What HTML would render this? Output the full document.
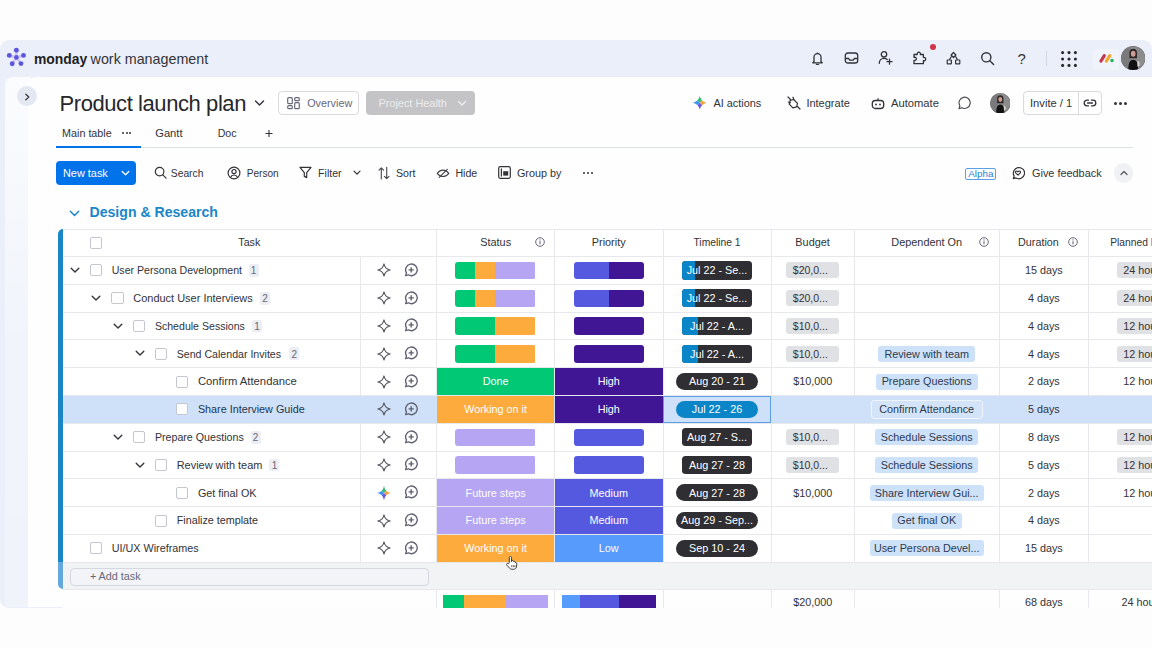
<!DOCTYPE html>
<html><head><meta charset="utf-8"><title>Product launch plan</title>
<style>
html,body{margin:0;padding:0;}
body{width:1152px;height:648px;overflow:hidden;background:#fdfdfd;font-family:"Liberation Sans", sans-serif;position:relative;}
.t{position:absolute;white-space:nowrap;}
.b{position:absolute;box-sizing:border-box;}
</style></head><body>

<div class="b" style="left:0.00px;top:40.00px;width:1152.00px;height:567.60px;background:#ebeff9;border-radius:9px 9px 0 9px;"></div>
<div class="b" style="left:5.00px;top:77.00px;width:26.00px;height:530.00px;background:linear-gradient(180deg,rgba(255,255,255,0.8),rgba(255,255,255,0.35) 45%,rgba(255,255,255,0.25));border-radius:8px 0 0 0;"></div>
<div class="b" style="left:28.00px;top:76.50px;width:1124.00px;height:530.50px;background:#fefefe;border-radius:8px 0 0 0;"></div>
<svg class="b" style="left:0;top:0" width="40" height="80" viewBox="0 0 40 80"><line x1="16.4" y1="57.4" x2="16.4" y2="50.2" stroke="#d2c4f7" stroke-width="2.6"/><line x1="16.4" y1="57.4" x2="23.5" y2="55.4" stroke="#d2c4f7" stroke-width="2.6"/><line x1="16.4" y1="57.4" x2="21.0" y2="63.6" stroke="#d2c4f7" stroke-width="2.6"/><line x1="16.4" y1="57.4" x2="12.2" y2="63.7" stroke="#d2c4f7" stroke-width="2.6"/><line x1="16.4" y1="57.4" x2="9.3" y2="55.4" stroke="#d2c4f7" stroke-width="2.6"/><circle cx="16.4" cy="50.2" r="2.45" fill="#5b57dc"/><circle cx="23.5" cy="55.4" r="2.45" fill="#5b57dc"/><circle cx="21.0" cy="63.6" r="2.45" fill="#5b57dc"/><circle cx="12.2" cy="63.7" r="2.45" fill="#5b57dc"/><circle cx="9.3" cy="55.4" r="2.45" fill="#5b57dc"/><circle cx="16.4" cy="57.4" r="2.3" fill="#5b57dc"/></svg>
<div class="t" style="left:34.00px;top:53.00px;font-size:13.9px;line-height:13.9px;color:#1f1f24;font-weight:700;">monday</div>
<div class="t" style="left:90.60px;top:52.00px;font-size:14.3px;line-height:14.3px;color:#333338;font-weight:400;">work management</div>
<svg class="b" style="left:811.00px;top:51.00px;" width="13" height="14" viewBox="0 0 13 14" fill="none"><path d="M3 10.5V6.2a3.5 3.5 0 0 1 7 0v4.3l1.2 1.3H1.8z" stroke="#323338" stroke-width="1.3" stroke-linejoin="round"/><path d="M5.2 12.8a1.4 1.4 0 0 0 2.6 0" stroke="#323338" stroke-width="1.2"/><path d="M6.5 1.5v1.2" stroke="#323338" stroke-width="1.2"/></svg>
<svg class="b" style="left:844.00px;top:51.00px;" width="15" height="14" viewBox="0 0 15 14" fill="none"><rect x="1.3" y="2" width="12.4" height="10" rx="2.6" stroke="#323338" stroke-width="1.3"/><path d="M1.5 7.5h3.2l1 1.6h3.6l1-1.6h3.2" stroke="#323338" stroke-width="1.3" stroke-linejoin="round"/></svg>
<svg class="b" style="left:878.00px;top:50.00px;" width="15" height="15" viewBox="0 0 15 15" fill="none"><circle cx="6" cy="4.3" r="2.7" stroke="#323338" stroke-width="1.3"/><path d="M1.3 13.3c0-3 2.1-4.9 4.7-4.9 1.3 0 2.4.4 3.2 1.1" stroke="#323338" stroke-width="1.3" stroke-linecap="round"/><path d="M11.5 9.2v5M9 11.7h5" stroke="#323338" stroke-width="1.3" stroke-linecap="round"/></svg>
<svg class="b" style="left:912.00px;top:51.00px;" width="15" height="14" viewBox="0 0 15 14" fill="none"><path d="M2 12.7V9.3c1.4.3 2.4-.6 2.4-1.6S3.4 6 2 6.3V3.5h3.2c-.3-1.5.6-2.3 1.6-2.3s1.9.8 1.6 2.3h3v3c1.4-.3 2.3.6 2.3 1.6s-.9 1.9-2.3 1.6v3z" stroke="#323338" stroke-width="1.3" stroke-linejoin="round"/></svg>
<div class="b" style="left:929.70px;top:44.20px;width:6.20px;height:6.20px;background:#d2334b;border-radius:50%;"></div>
<svg class="b" style="left:946.00px;top:51.00px;" width="15" height="14" viewBox="0 0 15 14" fill="none"><path d="M7.5 1.5l2.4 2.5-2.4 2.5-2.4-2.5z" stroke="#323338" stroke-width="1.2" stroke-linejoin="round"/><path d="M5.6 5.2L3.5 8.6M9.4 5.2l2.1 3.4" stroke="#323338" stroke-width="1.2"/><rect x="1.2" y="9" width="4.2" height="3.8" rx=".6" stroke="#323338" stroke-width="1.2"/><rect x="9.6" y="9" width="4.2" height="3.8" rx=".6" stroke="#323338" stroke-width="1.2"/></svg>
<svg class="b" style="left:980.00px;top:51.00px;" width="15" height="15" viewBox="0 0 15 15" fill="none"><circle cx="6.3" cy="6.3" r="4.6" stroke="#323338" stroke-width="1.4"/><path d="M9.8 9.8l3.8 3.8" stroke="#323338" stroke-width="1.4" stroke-linecap="round"/></svg>
<div class="t" style="left:721.60px;width:600px;text-align:center;top:51.00px;font-size:15px;line-height:15px;color:#323338;font-weight:400;">?</div>
<div class="b" style="left:1046.00px;top:50.50px;width:1.00px;height:15.50px;background:#d3d7e3;"></div>
<svg class="b" style="left:1061.30px;top:50.50px;" width="16" height="16" viewBox="0 0 16 16" fill="none"><circle cx="1.6" cy="1.6" r="1.55" fill="#2b2b30"/><circle cx="8.0" cy="1.6" r="1.55" fill="#2b2b30"/><circle cx="14.4" cy="1.6" r="1.55" fill="#2b2b30"/><circle cx="1.6" cy="8.0" r="1.55" fill="#2b2b30"/><circle cx="8.0" cy="8.0" r="1.55" fill="#2b2b30"/><circle cx="14.4" cy="8.0" r="1.55" fill="#2b2b30"/><circle cx="1.6" cy="14.4" r="1.55" fill="#2b2b30"/><circle cx="8.0" cy="14.4" r="1.55" fill="#2b2b30"/><circle cx="14.4" cy="14.4" r="1.55" fill="#2b2b30"/></svg>
<div class="b" style="left:1093.00px;top:49.00px;width:26.00px;height:20.50px;background:rgba(255,255,255,0.28);border-radius:3px;"></div>
<svg class="b" style="left:1097.00px;top:52.00px;" width="20" height="14" viewBox="0 0 20 14" fill="none"><path d="M4 9l3.3-5.3" stroke="#c13b50" stroke-width="3.3" stroke-linecap="round"/><path d="M9.5 9l3.3-5.3" stroke="#f4a833" stroke-width="3.3" stroke-linecap="round"/><circle cx="15" cy="8.6" r="1.75" fill="#1db55c"/></svg>
<svg class="b" style="left:1120.60px;top:45.80px" width="24.4" height="24.4" viewBox="0 0 24 24"><defs><clipPath id="av1132"><circle cx="12" cy="12" r="11.6"/></clipPath></defs><circle cx="12" cy="12" r="12" fill="#5d5d60"/><g clip-path="url(#av1132)"><rect width="24" height="24" fill="#8c8c8e"/><rect x="0" width="9" height="24" fill="#7a7a7c"/><path d="M8.3 12V6.5C8.3 4 9.8 2.6 12 2.6s3.7 1.4 3.7 3.9V12z" fill="#2e2626"/><ellipse cx="12" cy="7.6" rx="2.3" ry="2.9" fill="#cf9d94"/><path d="M7.2 24c0-6 .8-10.5 4.8-10.5s4.8 4.5 4.8 10.5z" fill="#111"/><path d="M16.2 14.5c1.3 0 2.2 1.3 2.2 3s-.9 3-2.2 3z" fill="#d8d4d0"/></g></svg>
<div class="t" style="left:59.50px;top:93.00px;font-size:22px;line-height:22px;color:#26262b;font-weight:400;letter-spacing:-0.42px;">Product launch plan</div>
<svg class="b" style="left:254.00px;top:99.00px;" width="11" height="8" viewBox="0 0 11 8" fill="none"><path d="M1.5 2l4 4 4-4" stroke="#323338" stroke-width="1.4" stroke-linecap="round" stroke-linejoin="round"/></svg>
<div class="b" style="left:278.00px;top:90.70px;width:81.40px;height:24.50px;border:1px solid #d9d9de;border-radius:4px;background:#fff;"></div>
<svg class="b" style="left:286.50px;top:97.00px;" width="13" height="12.5" viewBox="0 0 13 12.5" fill="none"><rect x=".7" y=".7" width="4.6" height="6" rx="1" stroke="#676879" stroke-width="1.2"/><rect x=".7" y="8.7" width="4.6" height="3" rx="1" stroke="#676879" stroke-width="1.2"/><rect x="7.7" y=".7" width="4.6" height="3" rx="1" stroke="#676879" stroke-width="1.2"/><rect x="7.7" y="5.7" width="4.6" height="6" rx="1" stroke="#676879" stroke-width="1.2"/></svg>
<div class="t" style="left:307.20px;top:98.00px;font-size:10.8px;line-height:10.8px;color:#676879;font-weight:400;">Overview</div>
<div class="b" style="left:365.90px;top:90.80px;width:109.40px;height:24.40px;background:#c4c4c7;border-radius:4px;"></div>
<div class="t" style="left:378.50px;top:98.00px;font-size:10.9px;line-height:10.9px;color:#ececee;font-weight:400;">Project Health</div>
<svg class="b" style="left:457.00px;top:100.00px;" width="10" height="7" viewBox="0 0 10 7" fill="none"><path d="M1.5 1.5l3.5 3.5 3.5-3.5" stroke="#f0f0f2" stroke-width="1.3" stroke-linecap="round" stroke-linejoin="round"/></svg>
<svg class="b" style="left:692.50px;top:96.20px" width="13.5" height="13.5" viewBox="0 0 14 14"><defs><clipPath id="sc1"><path d="M7 0Q8.4 5.6 14 7Q8.4 8.4 7 14Q5.6 8.4 0 7Q5.6 5.6 7 0z"/></clipPath></defs><g clip-path="url(#sc1)"><path d="M7 7L0 0H14z" fill="#34bd74"/><path d="M7 7L14 0V14z" fill="#f9a33c"/><path d="M7 7L14 14H0z" fill="#6c5ce2"/><path d="M7 7L0 14V0z" fill="#3e95ee"/></g></svg>
<div class="t" style="left:713.40px;top:98.00px;font-size:10.9px;line-height:10.9px;color:#323338;font-weight:400;">AI actions</div>
<svg class="b" style="left:787.00px;top:96.00px;" width="14" height="14" viewBox="0 0 14 14" fill="none"><path d="M3.2 4.4l3.5-.9 3.8 3.8-.9 3.5-3.7 1-3.7-3.7z" stroke="#323338" stroke-width="1.2" stroke-linejoin="round"/><path d="M1 1l2.5 2.5M10.5 10.5L13 13M6 1.2l.8 2.3M1.2 6l2.3.8" stroke="#323338" stroke-width="1.2" stroke-linecap="round"/></svg>
<div class="t" style="left:806.40px;top:98.00px;font-size:11px;line-height:11px;color:#323338;font-weight:400;">Integrate</div>
<svg class="b" style="left:870.50px;top:97.00px;" width="14" height="13" viewBox="0 0 14 13" fill="none"><rect x="1.3" y="3.5" width="11.4" height="8" rx="3" stroke="#323338" stroke-width="1.3"/><circle cx="5" cy="7.5" r=".9" fill="#323338"/><circle cx="9" cy="7.5" r=".9" fill="#323338"/><path d="M7 3.5V1.3" stroke="#323338" stroke-width="1.2"/></svg>
<div class="t" style="left:891.00px;top:98.00px;font-size:11.2px;line-height:11.2px;color:#323338;font-weight:400;">Automate</div>
<svg class="b" style="left:957.00px;top:95.50px;" width="14" height="14" viewBox="0 0 14 14" fill="none"><path d="M2 12.6l.9-2.8A5.6 5.6 0 1 1 4.9 11.7z" stroke="#4a4a52" stroke-width="1.15" stroke-linejoin="round"/></svg>
<svg class="b" style="left:989.50px;top:92.70px" width="20.6" height="20.6" viewBox="0 0 24 24"><defs><clipPath id="av999"><circle cx="12" cy="12" r="11.6"/></clipPath></defs><circle cx="12" cy="12" r="12" fill="#5d5d60"/><g clip-path="url(#av999)"><rect width="24" height="24" fill="#8c8c8e"/><rect x="0" width="9" height="24" fill="#7a7a7c"/><path d="M8.3 12V6.5C8.3 4 9.8 2.6 12 2.6s3.7 1.4 3.7 3.9V12z" fill="#2e2626"/><ellipse cx="12" cy="7.6" rx="2.3" ry="2.9" fill="#cf9d94"/><path d="M7.2 24c0-6 .8-10.5 4.8-10.5s4.8 4.5 4.8 10.5z" fill="#111"/><path d="M16.2 14.5c1.3 0 2.2 1.3 2.2 3s-.9 3-2.2 3z" fill="#d8d4d0"/></g></svg>
<div class="b" style="left:1023.30px;top:91.00px;width:78.60px;height:24.00px;border:1px solid #d9d9de;border-radius:4px;background:#fff;"></div>
<div class="b" style="left:1077.50px;top:91.00px;width:1.00px;height:24.00px;background:#d9d9de;"></div>
<div class="t" style="left:1030.00px;top:98.00px;font-size:11.2px;line-height:11.2px;color:#323338;font-weight:400;">Invite / 1</div>
<svg class="b" style="left:1083.00px;top:97.00px;" width="14" height="12" viewBox="0 0 14 12" fill="none"><path d="M5.5 3.2H4a2.8 2.8 0 0 0 0 5.6h1.5M8.5 3.2H10a2.8 2.8 0 0 1 0 5.6H8.5M4.5 6h5" stroke="#323338" stroke-width="1.3" stroke-linecap="round"/></svg>
<div class="b" style="left:1114.00px;top:101.60px;width:3.00px;height:3.00px;background:#323338;border-radius:50%;"></div>
<div class="b" style="left:1119.00px;top:101.60px;width:3.00px;height:3.00px;background:#323338;border-radius:50%;"></div>
<div class="b" style="left:1124.00px;top:101.60px;width:3.00px;height:3.00px;background:#323338;border-radius:50%;"></div>
<div class="t" style="left:62.10px;top:128.00px;font-size:10.75px;line-height:10.75px;color:#323338;font-weight:400;">Main table</div>
<div class="b" style="left:122.00px;top:132.10px;width:2.00px;height:2.00px;background:#323338;border-radius:50%;"></div>
<div class="b" style="left:125.60px;top:132.10px;width:2.00px;height:2.00px;background:#323338;border-radius:50%;"></div>
<div class="b" style="left:129.20px;top:132.10px;width:2.00px;height:2.00px;background:#323338;border-radius:50%;"></div>
<div class="t" style="left:155.20px;top:128.00px;font-size:11.2px;line-height:11.2px;color:#323338;font-weight:400;">Gantt</div>
<div class="t" style="left:217.70px;top:128.00px;font-size:10.6px;line-height:10.6px;color:#323338;font-weight:400;">Doc</div>
<svg class="b" style="left:264.50px;top:128.50px;" width="8" height="9" viewBox="0 0 8 9" fill="none"><path d="M4 1v7M.5 4.5h7" stroke="#323338" stroke-width="1.1"/></svg>
<div class="b" style="left:56.00px;top:147.00px;width:1077.00px;height:1.00px;background:#dde1ea;"></div>
<div class="b" style="left:56.25px;top:146.00px;width:84.40px;height:2.00px;background:#0073ea;"></div>
<div class="b" style="left:56.40px;top:161.00px;width:79.20px;height:23.60px;background:#0073ea;border-radius:4px;"></div>
<div class="t" style="left:63.00px;top:168.00px;font-size:10.9px;line-height:10.9px;color:#ffffff;font-weight:400;">New task</div>
<svg class="b" style="left:120.50px;top:169.50px;" width="9" height="7" viewBox="0 0 9 7" fill="none"><path d="M1.2 1.5l3.3 3.3 3.3-3.3" stroke="#fff" stroke-width="1.3" stroke-linecap="round" stroke-linejoin="round"/></svg>
<svg class="b" style="left:154.00px;top:166.00px;" width="13" height="13" viewBox="0 0 13 13" fill="none"><circle cx="5.6" cy="5.6" r="4.3" stroke="#323338" stroke-width="1.2"/><path d="M8.8 8.8l3.3 3.3" stroke="#323338" stroke-width="1.2" stroke-linecap="round"/></svg>
<div class="t" style="left:170.80px;top:169.00px;font-size:10.3px;line-height:10.3px;color:#323338;font-weight:400;">Search</div>
<svg class="b" style="left:226.50px;top:166.00px;" width="14" height="14" viewBox="0 0 14 14" fill="none"><circle cx="7" cy="7" r="5.9" stroke="#323338" stroke-width="1.2"/><circle cx="7" cy="5.6" r="2.1" stroke="#323338" stroke-width="1.2"/><path d="M3.4 11.6c.8-1.8 2-2.6 3.6-2.6s2.8.8 3.6 2.6" stroke="#323338" stroke-width="1.2"/></svg>
<div class="t" style="left:246.70px;top:169.00px;font-size:10.1px;line-height:10.1px;color:#323338;font-weight:400;">Person</div>
<svg class="b" style="left:299.00px;top:166.00px;" width="13" height="13" viewBox="0 0 13 13" fill="none"><path d="M1 1.3h11L7.7 6.6v5L5.3 10.4V6.6z" stroke="#323338" stroke-width="1.2" stroke-linejoin="round"/></svg>
<div class="t" style="left:318.10px;top:168.00px;font-size:10.6px;line-height:10.6px;color:#323338;font-weight:400;">Filter</div>
<svg class="b" style="left:353.00px;top:170.00px;" width="8" height="6" viewBox="0 0 8 6" fill="none"><path d="M1 1.2l3 3 3-3" stroke="#323338" stroke-width="1.2" stroke-linecap="round" stroke-linejoin="round"/></svg>
<svg class="b" style="left:377.50px;top:165.50px;" width="12" height="14" viewBox="0 0 12 14" fill="none"><path d="M3.3 13V1.8M1 4.1l2.3-2.3 2.3 2.3M8.7 1.2v11.2M6.4 10.3l2.3 2.3 2.3-2.3" stroke="#45454d" stroke-width="1.1" stroke-linecap="round" stroke-linejoin="round"/></svg>
<div class="t" style="left:396.00px;top:168.00px;font-size:10.6px;line-height:10.6px;color:#323338;font-weight:400;">Sort</div>
<svg class="b" style="left:435.50px;top:166.50px;" width="14" height="12" viewBox="0 0 14 12" fill="none"><path d="M1.2 6.3c1.6-2.1 3.6-3.2 5.8-3.2s4.2 1.1 5.8 3.2c-1.6 2.1-3.6 3.2-5.8 3.2S2.8 8.4 1.2 6.3z" stroke="#45454d" stroke-width="1.1"/><path d="M3.2 10.3L11.3 2.3" stroke="#45454d" stroke-width="1.1" stroke-linecap="round"/></svg>
<div class="t" style="left:455.40px;top:168.00px;font-size:10.65px;line-height:10.65px;color:#323338;font-weight:400;">Hide</div>
<svg class="b" style="left:497.80px;top:166.20px;" width="13" height="13" viewBox="0 0 13 13" fill="none"><rect x=".7" y=".7" width="11.6" height="11.6" rx="1.5" stroke="#323338" stroke-width="1.2"/><path d="M3.4 2.5v8" stroke="#323338" stroke-width="1.2"/><rect x="5.2" y="5.2" width="5" height="4.4" fill="#323338"/></svg>
<div class="t" style="left:516.90px;top:168.00px;font-size:10.8px;line-height:10.8px;color:#323338;font-weight:400;">Group by</div>
<div class="b" style="left:582.50px;top:171.60px;width:2.30px;height:2.30px;background:#323338;border-radius:50%;"></div>
<div class="b" style="left:586.80px;top:171.60px;width:2.30px;height:2.30px;background:#323338;border-radius:50%;"></div>
<div class="b" style="left:591.10px;top:171.60px;width:2.30px;height:2.30px;background:#323338;border-radius:50%;"></div>
<div class="b" style="left:965.20px;top:167.50px;width:31.00px;height:12.00px;border:1px solid #5d9fe6;border-radius:2px;"></div>
<div class="t" style="left:968.30px;top:169.00px;font-size:9.8px;line-height:9.8px;color:#2b7fd9;font-weight:400;">Alpha</div>
<svg class="b" style="left:1011.00px;top:165.50px;" width="14" height="14" viewBox="0 0 14 14" fill="none"><path d="M2.3 12.6l.9-2.5A5.6 5.6 0 1 1 5 11.9z" stroke="#323338" stroke-width="1.2" stroke-linejoin="round"/><path d="M7 9.2L4.9 7.1c-.8-.8-.4-2.1.7-2.1.6 0 1 .4 1.4.9.4-.5.8-.9 1.4-.9 1.1 0 1.5 1.3.7 2.1z" stroke="#323338" stroke-width="1.1" stroke-linejoin="round"/></svg>
<div class="t" style="left:1032.00px;top:168.00px;font-size:10.9px;line-height:10.9px;color:#323338;font-weight:400;">Give feedback</div>
<div class="b" style="left:1113.80px;top:163.20px;width:19.40px;height:19.40px;background:#f0f1f4;border-radius:50%;"></div>
<svg class="b" style="left:1119.50px;top:170.00px;" width="8" height="6" viewBox="0 0 8 6" fill="none"><path d="M1 4.5l3-3 3 3" stroke="#55555c" stroke-width="1.2" stroke-linecap="round" stroke-linejoin="round"/></svg>
<div class="b" style="left:16.50px;top:86.00px;width:20.00px;height:20.00px;background:#e4e8f2;border-radius:50%;"></div>
<svg class="b" style="left:23.50px;top:92.50px;" width="7" height="8" viewBox="0 0 7 8" fill="none"><path d="M1.8 1.2l3 2.8-3 2.8" stroke="#3a3a40" stroke-width="1.3" stroke-linecap="round" stroke-linejoin="round"/></svg>
<svg class="b" style="left:69.00px;top:209.50px;" width="11" height="7.5" viewBox="0 0 11 7.5" fill="none"><path d="M1.3 1.3l4.2 4.3 4.2-4.3" stroke="#1a86c7" stroke-width="1.4" stroke-linecap="round" stroke-linejoin="round"/></svg>
<div class="t" style="left:89.50px;top:205.00px;font-size:14.1px;line-height:14.1px;color:#1a86c7;font-weight:700;letter-spacing:0px;">Design &amp; Research</div>
<div class="b" style="left:63.00px;top:229.00px;width:1089.00px;height:333.30px;background:#ffffff;"></div>
<div class="b" style="left:63.00px;top:562.30px;width:1089.00px;height:27.10px;background:#f2f3f5;"></div>
<div class="b" style="left:63.00px;top:589.40px;width:1089.00px;height:20.00px;background:#fefefe;"></div>
<div class="b" style="left:58.00px;top:229.00px;width:5.00px;height:333.30px;background:#1a86c7;border-radius:5px 0 0 0;"></div>
<div class="b" style="left:58.00px;top:562.30px;width:5.00px;height:27.10px;background:#64a8dc;border-radius:0 0 0 5px;"></div>
<div class="b" style="left:63.00px;top:229.00px;width:1089.00px;height:1.00px;background:#e7e8ec;"></div>
<div class="b" style="left:63.00px;top:256.00px;width:1089.00px;height:1.00px;background:#e7e8ec;"></div>
<div class="b" style="left:63.00px;top:283.80px;width:1089.00px;height:1.00px;background:#e7e8ec;"></div>
<div class="b" style="left:63.00px;top:311.60px;width:1089.00px;height:1.00px;background:#e7e8ec;"></div>
<div class="b" style="left:63.00px;top:339.40px;width:1089.00px;height:1.00px;background:#e7e8ec;"></div>
<div class="b" style="left:63.00px;top:367.20px;width:1089.00px;height:1.00px;background:#e7e8ec;"></div>
<div class="b" style="left:63.00px;top:395.00px;width:1089.00px;height:1.00px;background:#e7e8ec;"></div>
<div class="b" style="left:63.00px;top:422.80px;width:1089.00px;height:1.00px;background:#e7e8ec;"></div>
<div class="b" style="left:63.00px;top:450.60px;width:1089.00px;height:1.00px;background:#e7e8ec;"></div>
<div class="b" style="left:63.00px;top:478.40px;width:1089.00px;height:1.00px;background:#e7e8ec;"></div>
<div class="b" style="left:63.00px;top:506.20px;width:1089.00px;height:1.00px;background:#e7e8ec;"></div>
<div class="b" style="left:63.00px;top:534.00px;width:1089.00px;height:1.00px;background:#e7e8ec;"></div>
<div class="b" style="left:63.00px;top:561.80px;width:1089.00px;height:1.00px;background:#e7e8ec;"></div>
<div class="b" style="left:63.00px;top:589.00px;width:1089.00px;height:1.00px;background:#e7e8ec;"></div>
<div class="b" style="left:436.10px;top:229.00px;width:1.00px;height:333.30px;background:#e7e8ec;"></div>
<div class="b" style="left:436.10px;top:589.40px;width:1.00px;height:20.00px;background:#e7e8ec;"></div>
<div class="b" style="left:554.00px;top:229.00px;width:1.00px;height:333.30px;background:#e7e8ec;"></div>
<div class="b" style="left:554.00px;top:589.40px;width:1.00px;height:20.00px;background:#e7e8ec;"></div>
<div class="b" style="left:662.50px;top:229.00px;width:1.00px;height:333.30px;background:#e7e8ec;"></div>
<div class="b" style="left:662.50px;top:589.40px;width:1.00px;height:20.00px;background:#e7e8ec;"></div>
<div class="b" style="left:771.00px;top:229.00px;width:1.00px;height:333.30px;background:#e7e8ec;"></div>
<div class="b" style="left:771.00px;top:589.40px;width:1.00px;height:20.00px;background:#e7e8ec;"></div>
<div class="b" style="left:853.50px;top:229.00px;width:1.00px;height:333.30px;background:#e7e8ec;"></div>
<div class="b" style="left:853.50px;top:589.40px;width:1.00px;height:20.00px;background:#e7e8ec;"></div>
<div class="b" style="left:998.90px;top:229.00px;width:1.00px;height:333.30px;background:#e7e8ec;"></div>
<div class="b" style="left:998.90px;top:589.40px;width:1.00px;height:20.00px;background:#e7e8ec;"></div>
<div class="b" style="left:1087.80px;top:229.00px;width:1.00px;height:333.30px;background:#e7e8ec;"></div>
<div class="b" style="left:1087.80px;top:589.40px;width:1.00px;height:20.00px;background:#e7e8ec;"></div>
<div class="b" style="left:360.10px;top:256.50px;width:1.00px;height:305.80px;background:#e7e8ec;"></div>
<div class="b" style="left:63.00px;top:396.00px;width:1089.00px;height:26.80px;background:#cfe1f8;"></div>
<div class="b" style="left:89.60px;top:236.50px;width:12.20px;height:12.20px;border:1px solid #c5c7d0;border-radius:2px;background:#fff;"></div>
<div class="t" style="left:-50.70px;width:600px;text-align:center;top:237.00px;font-size:10.7px;line-height:10.7px;color:#323338;font-weight:400;">Task</div>
<div class="t" style="left:195.70px;width:600px;text-align:center;top:237.00px;font-size:10.9px;line-height:10.9px;color:#323338;font-weight:400;">Status</div>
<svg class="b" style="left:534.60px;top:237.30px;" width="10" height="10" viewBox="0 0 10 10" fill="none"><circle cx="5" cy="5" r="4.3" stroke="#676879" stroke-width="1"/><path d="M5 4.3v3" stroke="#676879" stroke-width="1.1"/><circle cx="5" cy="2.9" r=".6" fill="#676879"/></svg>
<div class="t" style="left:308.70px;width:600px;text-align:center;top:237.00px;font-size:10.9px;line-height:10.9px;color:#323338;font-weight:400;">Priority</div>
<div class="t" style="left:417.00px;width:600px;text-align:center;top:238.00px;font-size:10.3px;line-height:10.3px;color:#323338;font-weight:400;">Timeline 1</div>
<div class="t" style="left:512.60px;width:600px;text-align:center;top:237.00px;font-size:10.9px;line-height:10.9px;color:#323338;font-weight:400;">Budget</div>
<div class="t" style="left:891.30px;top:237.00px;font-size:10.9px;line-height:10.9px;color:#323338;font-weight:400;">Dependent On</div>
<svg class="b" style="left:978.90px;top:237.30px;" width="10" height="10" viewBox="0 0 10 10" fill="none"><circle cx="5" cy="5" r="4.3" stroke="#676879" stroke-width="1"/><path d="M5 4.3v3" stroke="#676879" stroke-width="1.1"/><circle cx="5" cy="2.9" r=".6" fill="#676879"/></svg>
<div class="t" style="left:1018.10px;top:237.00px;font-size:10.75px;line-height:10.75px;color:#323338;font-weight:400;">Duration</div>
<svg class="b" style="left:1068.10px;top:237.30px;" width="10" height="10" viewBox="0 0 10 10" fill="none"><circle cx="5" cy="5" r="4.3" stroke="#676879" stroke-width="1"/><path d="M5 4.3v3" stroke="#676879" stroke-width="1.1"/><circle cx="5" cy="2.9" r=".6" fill="#676879"/></svg>
<div class="t" style="left:1110.20px;top:238.00px;font-size:10.3px;line-height:10.3px;color:#323338;font-weight:400;">Planned Effort</div>
<svg class="b" style="left:69.50px;top:266.90px;" width="10" height="7" viewBox="0 0 10 7" fill="none"><path d="M1.2 1.3l3.8 3.8 3.8-3.8" stroke="#323338" stroke-width="1.35" stroke-linecap="round" stroke-linejoin="round"/></svg>
<div class="b" style="left:89.60px;top:264.30px;width:12.20px;height:12.20px;border:1px solid #c5c7d0;border-radius:2px;background:#fff;"></div>
<div class="t" style="left:111.70px;top:265.00px;font-size:10.62px;line-height:10.62px;color:#323338;font-weight:400;">User Persona Development</div>
<div class="b" style="left:248.50px;top:264.00px;width:10.00px;height:12.80px;background:#eceef3;border-radius:2px;"></div>
<div class="t" style="left:-46.50px;width:600px;text-align:center;top:266.00px;font-size:10px;line-height:10px;color:#676879;font-weight:400;">1</div>
<svg class="b" style="left:377.20px;top:263.40px;" width="14" height="14" viewBox="0 0 14 14" fill="none"><path d="M7 1C7.7 4.5 9.5 6.3 13.1 7C9.5 7.7 7.7 9.5 7 12.9C6.3 9.5 4.5 7.7 .9 7C4.5 6.3 6.3 4.5 7 1z" stroke="#55555f" stroke-width="1.25" stroke-linejoin="round"/></svg>
<svg class="b" style="left:404.00px;top:262.80px;" width="14" height="14" viewBox="0 0 14 14" fill="none"><path d="M1.6 12.6l.9-2.7A5.8 5.8 0 1 1 4.4 11.8z" stroke="#5f6070" stroke-width="1.35" stroke-linejoin="round"/><path d="M7.2 4.3v5.2M4.6 6.9h5.2" stroke="#5f6070" stroke-width="1.4"/></svg>
<div class="b" style="left:455.4px;top:261.70px;width:80.3px;height:17.5px;border-radius:3px;overflow:hidden"><div style="position:absolute;left:0px;top:0;width:20px;height:100%;background:#00c875"></div><div style="position:absolute;left:20px;top:0;width:20px;height:100%;background:#fdab3d"></div><div style="position:absolute;left:40px;top:0;width:40px;height:100%;background:#b6a5f2"></div></div>
<div class="b" style="left:574px;top:261.70px;width:69.8px;height:17.5px;border-radius:3px;overflow:hidden"><div style="position:absolute;left:0px;top:0;width:35px;height:100%;background:#5559df"></div><div style="position:absolute;left:35px;top:0;width:35px;height:100%;background:#401694"></div></div>
<div class="b" style="left:682px;top:261.10px;width:70.2px;height:18.6px;border-radius:3.5px;overflow:hidden;background:#2f2f33"><div style="position:absolute;left:0;top:0;width:13px;height:100%;background:#0a86c8"></div></div>
<div class="t" style="left:417.00px;width:600px;text-align:center;top:265.00px;font-size:10.8px;line-height:10.8px;color:#ffffff;font-weight:400;">Jul 22 - Se...</div>
<div class="b" style="left:786.40px;top:262.30px;width:52.50px;height:16.20px;background:#e0e1e4;border-radius:3px;"></div>
<div class="t" style="left:792.80px;top:265.00px;font-size:10.5px;line-height:10.5px;color:#323338;font-weight:400;">$20,0...</div>
<div class="t" style="left:743.80px;width:600px;text-align:center;top:265.00px;font-size:10.8px;line-height:10.8px;color:#323338;font-weight:400;">15 days</div>
<div class="b" style="left:1117.40px;top:262.30px;width:60.00px;height:16.20px;background:#e0e1e4;border-radius:3px;"></div>
<div class="t" style="left:1123.30px;top:265.00px;font-size:10.8px;line-height:10.8px;color:#323338;font-weight:400;">24 hou</div>
<svg class="b" style="left:91.20px;top:294.70px;" width="10" height="7" viewBox="0 0 10 7" fill="none"><path d="M1.2 1.3l3.8 3.8 3.8-3.8" stroke="#323338" stroke-width="1.35" stroke-linecap="round" stroke-linejoin="round"/></svg>
<div class="b" style="left:111.40px;top:292.10px;width:12.20px;height:12.20px;border:1px solid #c5c7d0;border-radius:2px;background:#fff;"></div>
<div class="t" style="left:133.30px;top:293.00px;font-size:10.98px;line-height:10.98px;color:#323338;font-weight:400;">Conduct User Interviews</div>
<div class="b" style="left:260.00px;top:291.80px;width:10.00px;height:12.80px;background:#eceef3;border-radius:2px;"></div>
<div class="t" style="left:-35.00px;width:600px;text-align:center;top:294.00px;font-size:10px;line-height:10px;color:#676879;font-weight:400;">2</div>
<svg class="b" style="left:377.20px;top:291.20px;" width="14" height="14" viewBox="0 0 14 14" fill="none"><path d="M7 1C7.7 4.5 9.5 6.3 13.1 7C9.5 7.7 7.7 9.5 7 12.9C6.3 9.5 4.5 7.7 .9 7C4.5 6.3 6.3 4.5 7 1z" stroke="#55555f" stroke-width="1.25" stroke-linejoin="round"/></svg>
<svg class="b" style="left:404.00px;top:290.60px;" width="14" height="14" viewBox="0 0 14 14" fill="none"><path d="M1.6 12.6l.9-2.7A5.8 5.8 0 1 1 4.4 11.8z" stroke="#5f6070" stroke-width="1.35" stroke-linejoin="round"/><path d="M7.2 4.3v5.2M4.6 6.9h5.2" stroke="#5f6070" stroke-width="1.4"/></svg>
<div class="b" style="left:455.4px;top:289.50px;width:80.3px;height:17.5px;border-radius:3px;overflow:hidden"><div style="position:absolute;left:0px;top:0;width:20px;height:100%;background:#00c875"></div><div style="position:absolute;left:20px;top:0;width:20px;height:100%;background:#fdab3d"></div><div style="position:absolute;left:40px;top:0;width:40px;height:100%;background:#b6a5f2"></div></div>
<div class="b" style="left:574px;top:289.50px;width:69.8px;height:17.5px;border-radius:3px;overflow:hidden"><div style="position:absolute;left:0px;top:0;width:35px;height:100%;background:#5559df"></div><div style="position:absolute;left:35px;top:0;width:35px;height:100%;background:#401694"></div></div>
<div class="b" style="left:682px;top:288.90px;width:70.2px;height:18.6px;border-radius:3.5px;overflow:hidden;background:#2f2f33"><div style="position:absolute;left:0;top:0;width:13px;height:100%;background:#0a86c8"></div></div>
<div class="t" style="left:417.00px;width:600px;text-align:center;top:293.00px;font-size:10.8px;line-height:10.8px;color:#ffffff;font-weight:400;">Jul 22 - Se...</div>
<div class="b" style="left:786.40px;top:290.10px;width:52.50px;height:16.20px;background:#e0e1e4;border-radius:3px;"></div>
<div class="t" style="left:792.80px;top:293.00px;font-size:10.5px;line-height:10.5px;color:#323338;font-weight:400;">$20,0...</div>
<div class="t" style="left:743.80px;width:600px;text-align:center;top:293.00px;font-size:10.8px;line-height:10.8px;color:#323338;font-weight:400;">4 days</div>
<div class="b" style="left:1117.40px;top:290.10px;width:60.00px;height:16.20px;background:#e0e1e4;border-radius:3px;"></div>
<div class="t" style="left:1123.30px;top:293.00px;font-size:10.8px;line-height:10.8px;color:#323338;font-weight:400;">24 hou</div>
<svg class="b" style="left:112.90px;top:322.50px;" width="10" height="7" viewBox="0 0 10 7" fill="none"><path d="M1.2 1.3l3.8 3.8 3.8-3.8" stroke="#323338" stroke-width="1.35" stroke-linecap="round" stroke-linejoin="round"/></svg>
<div class="b" style="left:133.10px;top:319.90px;width:12.20px;height:12.20px;border:1px solid #c5c7d0;border-radius:2px;background:#fff;"></div>
<div class="t" style="left:154.90px;top:321.00px;font-size:10.58px;line-height:10.58px;color:#323338;font-weight:400;">Schedule Sessions</div>
<div class="b" style="left:252.00px;top:319.60px;width:10.00px;height:12.80px;background:#eceef3;border-radius:2px;"></div>
<div class="t" style="left:-43.00px;width:600px;text-align:center;top:322.00px;font-size:10px;line-height:10px;color:#676879;font-weight:400;">1</div>
<svg class="b" style="left:377.20px;top:319.00px;" width="14" height="14" viewBox="0 0 14 14" fill="none"><path d="M7 1C7.7 4.5 9.5 6.3 13.1 7C9.5 7.7 7.7 9.5 7 12.9C6.3 9.5 4.5 7.7 .9 7C4.5 6.3 6.3 4.5 7 1z" stroke="#55555f" stroke-width="1.25" stroke-linejoin="round"/></svg>
<svg class="b" style="left:404.00px;top:318.40px;" width="14" height="14" viewBox="0 0 14 14" fill="none"><path d="M1.6 12.6l.9-2.7A5.8 5.8 0 1 1 4.4 11.8z" stroke="#5f6070" stroke-width="1.35" stroke-linejoin="round"/><path d="M7.2 4.3v5.2M4.6 6.9h5.2" stroke="#5f6070" stroke-width="1.4"/></svg>
<div class="b" style="left:455.4px;top:317.30px;width:80.3px;height:17.5px;border-radius:3px;overflow:hidden"><div style="position:absolute;left:0px;top:0;width:40px;height:100%;background:#00c875"></div><div style="position:absolute;left:40px;top:0;width:40px;height:100%;background:#fdab3d"></div></div>
<div class="b" style="left:574px;top:317.30px;width:69.8px;height:17.5px;border-radius:3px;overflow:hidden"><div style="position:absolute;left:0px;top:0;width:70px;height:100%;background:#401694"></div></div>
<div class="b" style="left:682px;top:316.70px;width:70.2px;height:18.6px;border-radius:3.5px;overflow:hidden;background:#2f2f33"><div style="position:absolute;left:0;top:0;width:16px;height:100%;background:#0a86c8"></div></div>
<div class="t" style="left:417.00px;width:600px;text-align:center;top:321.00px;font-size:10.8px;line-height:10.8px;color:#ffffff;font-weight:400;">Jul 22 - A...</div>
<div class="b" style="left:786.40px;top:317.90px;width:52.50px;height:16.20px;background:#e0e1e4;border-radius:3px;"></div>
<div class="t" style="left:792.80px;top:321.00px;font-size:10.5px;line-height:10.5px;color:#323338;font-weight:400;">$10,0...</div>
<div class="t" style="left:743.80px;width:600px;text-align:center;top:321.00px;font-size:10.8px;line-height:10.8px;color:#323338;font-weight:400;">4 days</div>
<div class="b" style="left:1117.40px;top:317.90px;width:60.00px;height:16.20px;background:#e0e1e4;border-radius:3px;"></div>
<div class="t" style="left:1123.30px;top:321.00px;font-size:10.8px;line-height:10.8px;color:#323338;font-weight:400;">12 hou</div>
<svg class="b" style="left:134.60px;top:350.30px;" width="10" height="7" viewBox="0 0 10 7" fill="none"><path d="M1.2 1.3l3.8 3.8 3.8-3.8" stroke="#323338" stroke-width="1.35" stroke-linecap="round" stroke-linejoin="round"/></svg>
<div class="b" style="left:154.80px;top:347.70px;width:12.20px;height:12.20px;border:1px solid #c5c7d0;border-radius:2px;background:#fff;"></div>
<div class="t" style="left:176.70px;top:349.00px;font-size:10.62px;line-height:10.62px;color:#323338;font-weight:400;">Send Calendar Invites</div>
<div class="b" style="left:289.20px;top:347.40px;width:10.00px;height:12.80px;background:#eceef3;border-radius:2px;"></div>
<div class="t" style="left:-5.80px;width:600px;text-align:center;top:350.00px;font-size:10px;line-height:10px;color:#676879;font-weight:400;">2</div>
<svg class="b" style="left:377.20px;top:346.80px;" width="14" height="14" viewBox="0 0 14 14" fill="none"><path d="M7 1C7.7 4.5 9.5 6.3 13.1 7C9.5 7.7 7.7 9.5 7 12.9C6.3 9.5 4.5 7.7 .9 7C4.5 6.3 6.3 4.5 7 1z" stroke="#55555f" stroke-width="1.25" stroke-linejoin="round"/></svg>
<svg class="b" style="left:404.00px;top:346.20px;" width="14" height="14" viewBox="0 0 14 14" fill="none"><path d="M1.6 12.6l.9-2.7A5.8 5.8 0 1 1 4.4 11.8z" stroke="#5f6070" stroke-width="1.35" stroke-linejoin="round"/><path d="M7.2 4.3v5.2M4.6 6.9h5.2" stroke="#5f6070" stroke-width="1.4"/></svg>
<div class="b" style="left:455.4px;top:345.10px;width:80.3px;height:17.5px;border-radius:3px;overflow:hidden"><div style="position:absolute;left:0px;top:0;width:40px;height:100%;background:#00c875"></div><div style="position:absolute;left:40px;top:0;width:40px;height:100%;background:#fdab3d"></div></div>
<div class="b" style="left:574px;top:345.10px;width:69.8px;height:17.5px;border-radius:3px;overflow:hidden"><div style="position:absolute;left:0px;top:0;width:70px;height:100%;background:#401694"></div></div>
<div class="b" style="left:682px;top:344.50px;width:70.2px;height:18.6px;border-radius:3.5px;overflow:hidden;background:#2f2f33"><div style="position:absolute;left:0;top:0;width:16px;height:100%;background:#0a86c8"></div></div>
<div class="t" style="left:417.00px;width:600px;text-align:center;top:349.00px;font-size:10.8px;line-height:10.8px;color:#ffffff;font-weight:400;">Jul 22 - A...</div>
<div class="b" style="left:786.40px;top:345.70px;width:52.50px;height:16.20px;background:#e0e1e4;border-radius:3px;"></div>
<div class="t" style="left:792.80px;top:349.00px;font-size:10.5px;line-height:10.5px;color:#323338;font-weight:400;">$10,0...</div>
<div class="b" style="left:877.95px;top:345.70px;width:97.50px;height:16.20px;background:#cde1f9;border-radius:3px;"></div>
<div class="t" style="left:626.70px;width:600px;text-align:center;top:349.00px;font-size:10.8px;line-height:10.8px;color:#2d3a4f;font-weight:400;">Review with team</div>
<div class="t" style="left:743.80px;width:600px;text-align:center;top:349.00px;font-size:10.8px;line-height:10.8px;color:#323338;font-weight:400;">4 days</div>
<div class="b" style="left:1117.40px;top:345.70px;width:60.00px;height:16.20px;background:#e0e1e4;border-radius:3px;"></div>
<div class="t" style="left:1123.30px;top:349.00px;font-size:10.8px;line-height:10.8px;color:#323338;font-weight:400;">12 hou</div>
<div class="b" style="left:176.30px;top:375.50px;width:12.20px;height:12.20px;border:1px solid #c5c7d0;border-radius:2px;background:#fff;"></div>
<div class="t" style="left:197.90px;top:376.00px;font-size:11.27px;line-height:11.27px;color:#323338;font-weight:400;">Confirm Attendance</div>
<svg class="b" style="left:377.20px;top:374.60px;" width="14" height="14" viewBox="0 0 14 14" fill="none"><path d="M7 1C7.7 4.5 9.5 6.3 13.1 7C9.5 7.7 7.7 9.5 7 12.9C6.3 9.5 4.5 7.7 .9 7C4.5 6.3 6.3 4.5 7 1z" stroke="#55555f" stroke-width="1.25" stroke-linejoin="round"/></svg>
<svg class="b" style="left:404.00px;top:374.00px;" width="14" height="14" viewBox="0 0 14 14" fill="none"><path d="M1.6 12.6l.9-2.7A5.8 5.8 0 1 1 4.4 11.8z" stroke="#5f6070" stroke-width="1.35" stroke-linejoin="round"/><path d="M7.2 4.3v5.2M4.6 6.9h5.2" stroke="#5f6070" stroke-width="1.4"/></svg>
<div class="b" style="left:437.10px;top:368.20px;width:116.90px;height:26.80px;background:#00c875;"></div>
<div class="t" style="left:195.55px;width:600px;text-align:center;top:376.00px;font-size:10.8px;line-height:10.8px;color:#ffffff;font-weight:400;">Done</div>
<div class="b" style="left:555.00px;top:368.20px;width:107.50px;height:26.80px;background:#401694;"></div>
<div class="t" style="left:308.75px;width:600px;text-align:center;top:376.00px;font-size:10.8px;line-height:10.8px;color:#ffffff;font-weight:400;">High</div>
<div class="b" style="left:675.50px;top:373.00px;width:82.70px;height:17.20px;background:#2f2f33;border-radius:9px;"></div>
<div class="t" style="left:417.00px;width:600px;text-align:center;top:376.00px;font-size:10.8px;line-height:10.8px;color:#ffffff;font-weight:400;">Aug 20 - 21</div>
<div class="t" style="left:512.70px;width:600px;text-align:center;top:376.00px;font-size:10.8px;line-height:10.8px;color:#323338;font-weight:400;">$10,000</div>
<div class="b" style="left:875.70px;top:373.50px;width:102.00px;height:16.20px;background:#cde1f9;border-radius:3px;"></div>
<div class="t" style="left:626.70px;width:600px;text-align:center;top:376.00px;font-size:10.8px;line-height:10.8px;color:#2d3a4f;font-weight:400;">Prepare Questions</div>
<div class="t" style="left:743.80px;width:600px;text-align:center;top:376.00px;font-size:10.8px;line-height:10.8px;color:#323338;font-weight:400;">2 days</div>
<div class="t" style="left:1123.30px;top:376.00px;font-size:10.8px;line-height:10.8px;color:#323338;font-weight:400;">12 hou</div>
<div class="b" style="left:176.30px;top:403.30px;width:12.20px;height:12.20px;border:1px solid #c5c7d0;border-radius:2px;background:#fff;"></div>
<div class="t" style="left:197.90px;top:404.00px;font-size:10.81px;line-height:10.81px;color:#23344d;font-weight:400;">Share Interview Guide</div>
<svg class="b" style="left:377.20px;top:402.40px;" width="14" height="14" viewBox="0 0 14 14" fill="none"><path d="M7 1C7.7 4.5 9.5 6.3 13.1 7C9.5 7.7 7.7 9.5 7 12.9C6.3 9.5 4.5 7.7 .9 7C4.5 6.3 6.3 4.5 7 1z" stroke="#55555f" stroke-width="1.25" stroke-linejoin="round"/></svg>
<svg class="b" style="left:404.00px;top:401.80px;" width="14" height="14" viewBox="0 0 14 14" fill="none"><path d="M1.6 12.6l.9-2.7A5.8 5.8 0 1 1 4.4 11.8z" stroke="#5f6070" stroke-width="1.35" stroke-linejoin="round"/><path d="M7.2 4.3v5.2M4.6 6.9h5.2" stroke="#5f6070" stroke-width="1.4"/></svg>
<div class="b" style="left:437.10px;top:396.00px;width:116.90px;height:26.80px;background:#fdab3d;"></div>
<div class="t" style="left:195.55px;width:600px;text-align:center;top:404.00px;font-size:10.8px;line-height:10.8px;color:#ffffff;font-weight:400;">Working on it</div>
<div class="b" style="left:555.00px;top:396.00px;width:107.50px;height:26.80px;background:#401694;"></div>
<div class="t" style="left:308.75px;width:600px;text-align:center;top:404.00px;font-size:10.8px;line-height:10.8px;color:#ffffff;font-weight:400;">High</div>
<div class="b" style="left:663.30px;top:395.80px;width:107.40px;height:27.20px;border:1px solid #5c9ee6;"></div>
<div class="b" style="left:675.50px;top:400.80px;width:82.70px;height:17.20px;background:#0a86c8;border-radius:9px;"></div>
<div class="t" style="left:417.00px;width:600px;text-align:center;top:404.00px;font-size:10.8px;line-height:10.8px;color:#ffffff;font-weight:400;">Jul 22 - 26</div>
<div class="b" style="left:870.55px;top:400.30px;width:112.30px;height:18.30px;border:1px solid #eef4fc;border-radius:3px;background:#d3e4f9;"></div>
<div class="t" style="left:626.70px;width:600px;text-align:center;top:404.00px;font-size:10.8px;line-height:10.8px;color:#2d3a4f;font-weight:400;">Confirm Attendance</div>
<div class="t" style="left:743.80px;width:600px;text-align:center;top:404.00px;font-size:10.8px;line-height:10.8px;color:#323338;font-weight:400;">5 days</div>
<svg class="b" style="left:112.90px;top:433.70px;" width="10" height="7" viewBox="0 0 10 7" fill="none"><path d="M1.2 1.3l3.8 3.8 3.8-3.8" stroke="#323338" stroke-width="1.35" stroke-linecap="round" stroke-linejoin="round"/></svg>
<div class="b" style="left:133.10px;top:431.10px;width:12.20px;height:12.20px;border:1px solid #c5c7d0;border-radius:2px;background:#fff;"></div>
<div class="t" style="left:154.90px;top:432.00px;font-size:10.66px;line-height:10.66px;color:#323338;font-weight:400;">Prepare Questions</div>
<div class="b" style="left:250.60px;top:430.80px;width:10.00px;height:12.80px;background:#eceef3;border-radius:2px;"></div>
<div class="t" style="left:-44.40px;width:600px;text-align:center;top:433.00px;font-size:10px;line-height:10px;color:#676879;font-weight:400;">2</div>
<svg class="b" style="left:377.20px;top:430.20px;" width="14" height="14" viewBox="0 0 14 14" fill="none"><path d="M7 1C7.7 4.5 9.5 6.3 13.1 7C9.5 7.7 7.7 9.5 7 12.9C6.3 9.5 4.5 7.7 .9 7C4.5 6.3 6.3 4.5 7 1z" stroke="#55555f" stroke-width="1.25" stroke-linejoin="round"/></svg>
<svg class="b" style="left:404.00px;top:429.60px;" width="14" height="14" viewBox="0 0 14 14" fill="none"><path d="M1.6 12.6l.9-2.7A5.8 5.8 0 1 1 4.4 11.8z" stroke="#5f6070" stroke-width="1.35" stroke-linejoin="round"/><path d="M7.2 4.3v5.2M4.6 6.9h5.2" stroke="#5f6070" stroke-width="1.4"/></svg>
<div class="b" style="left:455.4px;top:428.50px;width:80.3px;height:17.5px;border-radius:3px;overflow:hidden"><div style="position:absolute;left:0px;top:0;width:80px;height:100%;background:#b6a5f2"></div></div>
<div class="b" style="left:574px;top:428.50px;width:69.8px;height:17.5px;border-radius:3px;overflow:hidden"><div style="position:absolute;left:0px;top:0;width:70px;height:100%;background:#5559df"></div></div>
<div class="b" style="left:682px;top:427.90px;width:70.2px;height:18.6px;border-radius:3.5px;overflow:hidden;background:#2f2f33"></div>
<div class="t" style="left:417.00px;width:600px;text-align:center;top:432.00px;font-size:10.8px;line-height:10.8px;color:#ffffff;font-weight:400;">Aug 27 - S...</div>
<div class="b" style="left:786.40px;top:429.10px;width:52.50px;height:16.20px;background:#e0e1e4;border-radius:3px;"></div>
<div class="t" style="left:792.80px;top:432.00px;font-size:10.5px;line-height:10.5px;color:#323338;font-weight:400;">$10,0...</div>
<div class="b" style="left:875.30px;top:429.10px;width:102.80px;height:16.20px;background:#cde1f9;border-radius:3px;"></div>
<div class="t" style="left:626.70px;width:600px;text-align:center;top:432.00px;font-size:10.8px;line-height:10.8px;color:#2d3a4f;font-weight:400;">Schedule Sessions</div>
<div class="t" style="left:743.80px;width:600px;text-align:center;top:432.00px;font-size:10.8px;line-height:10.8px;color:#323338;font-weight:400;">8 days</div>
<div class="b" style="left:1117.40px;top:429.10px;width:60.00px;height:16.20px;background:#e0e1e4;border-radius:3px;"></div>
<div class="t" style="left:1123.30px;top:432.00px;font-size:10.8px;line-height:10.8px;color:#323338;font-weight:400;">12 hou</div>
<svg class="b" style="left:134.60px;top:461.50px;" width="10" height="7" viewBox="0 0 10 7" fill="none"><path d="M1.2 1.3l3.8 3.8 3.8-3.8" stroke="#323338" stroke-width="1.35" stroke-linecap="round" stroke-linejoin="round"/></svg>
<div class="b" style="left:154.80px;top:458.90px;width:12.20px;height:12.20px;border:1px solid #c5c7d0;border-radius:2px;background:#fff;"></div>
<div class="t" style="left:176.70px;top:460.00px;font-size:10.95px;line-height:10.95px;color:#323338;font-weight:400;">Review with team</div>
<div class="b" style="left:269.40px;top:458.60px;width:10.00px;height:12.80px;background:#eceef3;border-radius:2px;"></div>
<div class="t" style="left:-25.60px;width:600px;text-align:center;top:461.00px;font-size:10px;line-height:10px;color:#676879;font-weight:400;">1</div>
<svg class="b" style="left:377.20px;top:458.00px;" width="14" height="14" viewBox="0 0 14 14" fill="none"><path d="M7 1C7.7 4.5 9.5 6.3 13.1 7C9.5 7.7 7.7 9.5 7 12.9C6.3 9.5 4.5 7.7 .9 7C4.5 6.3 6.3 4.5 7 1z" stroke="#55555f" stroke-width="1.25" stroke-linejoin="round"/></svg>
<svg class="b" style="left:404.00px;top:457.40px;" width="14" height="14" viewBox="0 0 14 14" fill="none"><path d="M1.6 12.6l.9-2.7A5.8 5.8 0 1 1 4.4 11.8z" stroke="#5f6070" stroke-width="1.35" stroke-linejoin="round"/><path d="M7.2 4.3v5.2M4.6 6.9h5.2" stroke="#5f6070" stroke-width="1.4"/></svg>
<div class="b" style="left:455.4px;top:456.30px;width:80.3px;height:17.5px;border-radius:3px;overflow:hidden"><div style="position:absolute;left:0px;top:0;width:80px;height:100%;background:#b6a5f2"></div></div>
<div class="b" style="left:574px;top:456.30px;width:69.8px;height:17.5px;border-radius:3px;overflow:hidden"><div style="position:absolute;left:0px;top:0;width:70px;height:100%;background:#5559df"></div></div>
<div class="b" style="left:682px;top:455.70px;width:70.2px;height:18.6px;border-radius:3.5px;overflow:hidden;background:#2f2f33"></div>
<div class="t" style="left:417.00px;width:600px;text-align:center;top:460.00px;font-size:10.8px;line-height:10.8px;color:#ffffff;font-weight:400;">Aug 27 - 28</div>
<div class="b" style="left:786.40px;top:456.90px;width:52.50px;height:16.20px;background:#e0e1e4;border-radius:3px;"></div>
<div class="t" style="left:792.80px;top:460.00px;font-size:10.5px;line-height:10.5px;color:#323338;font-weight:400;">$10,0...</div>
<div class="b" style="left:875.30px;top:456.90px;width:102.80px;height:16.20px;background:#cde1f9;border-radius:3px;"></div>
<div class="t" style="left:626.70px;width:600px;text-align:center;top:460.00px;font-size:10.8px;line-height:10.8px;color:#2d3a4f;font-weight:400;">Schedule Sessions</div>
<div class="t" style="left:743.80px;width:600px;text-align:center;top:460.00px;font-size:10.8px;line-height:10.8px;color:#323338;font-weight:400;">5 days</div>
<div class="b" style="left:1117.40px;top:456.90px;width:60.00px;height:16.20px;background:#e0e1e4;border-radius:3px;"></div>
<div class="t" style="left:1123.30px;top:460.00px;font-size:10.8px;line-height:10.8px;color:#323338;font-weight:400;">12 hou</div>
<div class="b" style="left:176.30px;top:486.70px;width:12.20px;height:12.20px;border:1px solid #c5c7d0;border-radius:2px;background:#fff;"></div>
<div class="t" style="left:197.90px;top:488.00px;font-size:10.78px;line-height:10.78px;color:#323338;font-weight:400;">Get final OK</div>
<svg class="b" style="left:377.30px;top:485.80px" width="14" height="14" viewBox="0 0 14 14"><defs><clipPath id="sc2"><path d="M7 0Q8.1 5.9 14 7Q8.1 8.1 7 14Q5.9 8.1 0 7Q5.9 5.9 7 0z"/></clipPath></defs><g clip-path="url(#sc2)"><path d="M7 7L0 0H14z" fill="#34bd74"/><path d="M7 7L14 0V14z" fill="#f9a33c"/><path d="M7 7L14 14H0z" fill="#6c5ce2"/><path d="M7 7L0 14V0z" fill="#3e95ee"/></g></svg>
<svg class="b" style="left:404.00px;top:485.20px;" width="14" height="14" viewBox="0 0 14 14" fill="none"><path d="M1.6 12.6l.9-2.7A5.8 5.8 0 1 1 4.4 11.8z" stroke="#5f6070" stroke-width="1.35" stroke-linejoin="round"/><path d="M7.2 4.3v5.2M4.6 6.9h5.2" stroke="#5f6070" stroke-width="1.4"/></svg>
<div class="b" style="left:437.10px;top:479.40px;width:116.90px;height:26.80px;background:#b6a5f2;"></div>
<div class="t" style="left:195.55px;width:600px;text-align:center;top:488.00px;font-size:10.8px;line-height:10.8px;color:#ffffff;font-weight:400;">Future steps</div>
<div class="b" style="left:555.00px;top:479.40px;width:107.50px;height:26.80px;background:#5559df;"></div>
<div class="t" style="left:308.75px;width:600px;text-align:center;top:488.00px;font-size:10.8px;line-height:10.8px;color:#ffffff;font-weight:400;">Medium</div>
<div class="b" style="left:675.50px;top:484.20px;width:82.70px;height:17.20px;background:#2f2f33;border-radius:9px;"></div>
<div class="t" style="left:417.00px;width:600px;text-align:center;top:488.00px;font-size:10.8px;line-height:10.8px;color:#ffffff;font-weight:400;">Aug 27 - 28</div>
<div class="t" style="left:512.70px;width:600px;text-align:center;top:488.00px;font-size:10.8px;line-height:10.8px;color:#323338;font-weight:400;">$10,000</div>
<div class="b" style="left:869.75px;top:484.70px;width:113.90px;height:16.20px;background:#cde1f9;border-radius:3px;"></div>
<div class="t" style="left:626.70px;width:600px;text-align:center;top:488.00px;font-size:10.8px;line-height:10.8px;color:#2d3a4f;font-weight:400;">Share Interview Gui...</div>
<div class="t" style="left:743.80px;width:600px;text-align:center;top:488.00px;font-size:10.8px;line-height:10.8px;color:#323338;font-weight:400;">2 days</div>
<div class="t" style="left:1123.30px;top:488.00px;font-size:10.8px;line-height:10.8px;color:#323338;font-weight:400;">12 hou</div>
<div class="b" style="left:154.80px;top:514.50px;width:12.20px;height:12.20px;border:1px solid #c5c7d0;border-radius:2px;background:#fff;"></div>
<div class="t" style="left:176.70px;top:515.00px;font-size:10.77px;line-height:10.77px;color:#323338;font-weight:400;">Finalize template</div>
<svg class="b" style="left:377.20px;top:513.60px;" width="14" height="14" viewBox="0 0 14 14" fill="none"><path d="M7 1C7.7 4.5 9.5 6.3 13.1 7C9.5 7.7 7.7 9.5 7 12.9C6.3 9.5 4.5 7.7 .9 7C4.5 6.3 6.3 4.5 7 1z" stroke="#55555f" stroke-width="1.25" stroke-linejoin="round"/></svg>
<svg class="b" style="left:404.00px;top:513.00px;" width="14" height="14" viewBox="0 0 14 14" fill="none"><path d="M1.6 12.6l.9-2.7A5.8 5.8 0 1 1 4.4 11.8z" stroke="#5f6070" stroke-width="1.35" stroke-linejoin="round"/><path d="M7.2 4.3v5.2M4.6 6.9h5.2" stroke="#5f6070" stroke-width="1.4"/></svg>
<div class="b" style="left:437.10px;top:507.20px;width:116.90px;height:26.80px;background:#b6a5f2;"></div>
<div class="t" style="left:195.55px;width:600px;text-align:center;top:515.00px;font-size:10.8px;line-height:10.8px;color:#ffffff;font-weight:400;">Future steps</div>
<div class="b" style="left:555.00px;top:507.20px;width:107.50px;height:26.80px;background:#5559df;"></div>
<div class="t" style="left:308.75px;width:600px;text-align:center;top:515.00px;font-size:10.8px;line-height:10.8px;color:#ffffff;font-weight:400;">Medium</div>
<div class="b" style="left:675.50px;top:512.00px;width:82.70px;height:17.20px;background:#2f2f33;border-radius:9px;"></div>
<div class="t" style="left:417.00px;width:600px;text-align:center;top:515.00px;font-size:10.8px;line-height:10.8px;color:#ffffff;font-weight:400;">Aug 29 - Sep...</div>
<div class="b" style="left:891.50px;top:512.50px;width:70.40px;height:16.20px;background:#cde1f9;border-radius:3px;"></div>
<div class="t" style="left:626.70px;width:600px;text-align:center;top:515.00px;font-size:10.8px;line-height:10.8px;color:#2d3a4f;font-weight:400;">Get final OK</div>
<div class="t" style="left:743.80px;width:600px;text-align:center;top:515.00px;font-size:10.8px;line-height:10.8px;color:#323338;font-weight:400;">4 days</div>
<div class="b" style="left:89.60px;top:542.30px;width:12.20px;height:12.20px;border:1px solid #c5c7d0;border-radius:2px;background:#fff;"></div>
<div class="t" style="left:111.70px;top:543.00px;font-size:10.81px;line-height:10.81px;color:#323338;font-weight:400;">UI/UX Wireframes</div>
<svg class="b" style="left:377.20px;top:541.40px;" width="14" height="14" viewBox="0 0 14 14" fill="none"><path d="M7 1C7.7 4.5 9.5 6.3 13.1 7C9.5 7.7 7.7 9.5 7 12.9C6.3 9.5 4.5 7.7 .9 7C4.5 6.3 6.3 4.5 7 1z" stroke="#55555f" stroke-width="1.25" stroke-linejoin="round"/></svg>
<svg class="b" style="left:404.00px;top:540.80px;" width="14" height="14" viewBox="0 0 14 14" fill="none"><path d="M1.6 12.6l.9-2.7A5.8 5.8 0 1 1 4.4 11.8z" stroke="#5f6070" stroke-width="1.35" stroke-linejoin="round"/><path d="M7.2 4.3v5.2M4.6 6.9h5.2" stroke="#5f6070" stroke-width="1.4"/></svg>
<div class="b" style="left:437.10px;top:535.00px;width:116.90px;height:26.80px;background:#fdab3d;"></div>
<div class="t" style="left:195.55px;width:600px;text-align:center;top:543.00px;font-size:10.8px;line-height:10.8px;color:#ffffff;font-weight:400;">Working on it</div>
<div class="b" style="left:555.00px;top:535.00px;width:107.50px;height:26.80px;background:#579bfc;"></div>
<div class="t" style="left:308.75px;width:600px;text-align:center;top:543.00px;font-size:10.8px;line-height:10.8px;color:#ffffff;font-weight:400;">Low</div>
<div class="b" style="left:675.50px;top:539.80px;width:82.70px;height:17.20px;background:#2f2f33;border-radius:9px;"></div>
<div class="t" style="left:417.00px;width:600px;text-align:center;top:543.00px;font-size:10.8px;line-height:10.8px;color:#ffffff;font-weight:400;">Sep 10 - 24</div>
<div class="b" style="left:869.80px;top:540.30px;width:113.80px;height:16.20px;background:#cde1f9;border-radius:3px;"></div>
<div class="t" style="left:626.70px;width:600px;text-align:center;top:543.00px;font-size:10.8px;line-height:10.8px;color:#2d3a4f;font-weight:400;">User Persona Devel...</div>
<div class="t" style="left:743.80px;width:600px;text-align:center;top:543.00px;font-size:10.8px;line-height:10.8px;color:#323338;font-weight:400;">15 days</div>
<div class="b" style="left:70.00px;top:567.50px;width:359.00px;height:18.00px;border:1px solid #d5d8e0;border-radius:4px;background:#f3f4f7;"></div>
<div class="t" style="left:89.90px;top:571.00px;font-size:10.8px;line-height:10.8px;color:#676879;font-weight:400;">+ Add task</div>
<div class="b" style="left:443.1px;top:594.6px;width:105.0px;height:14px;overflow:hidden"><div style="position:absolute;left:0px;top:0;width:21.1px;height:100%;background:#00c875"></div><div style="position:absolute;left:21.1px;top:0;width:42.1px;height:100%;background:#fdab3d"></div><div style="position:absolute;left:63.2px;top:0;width:41.8px;height:100%;background:#b6a5f2"></div></div>
<div class="b" style="left:561.5px;top:594.6px;width:94.8px;height:14px;overflow:hidden"><div style="position:absolute;left:0px;top:0;width:18.9px;height:100%;background:#579bfc"></div><div style="position:absolute;left:18.9px;top:0;width:38.4px;height:100%;background:#5559df"></div><div style="position:absolute;left:57.3px;top:0;width:37.5px;height:100%;background:#401694"></div></div>
<div class="t" style="left:512.70px;width:600px;text-align:center;top:597.00px;font-size:10.8px;line-height:10.8px;color:#323338;font-weight:400;">$20,000</div>
<div class="t" style="left:743.80px;width:600px;text-align:center;top:597.00px;font-size:10.8px;line-height:10.8px;color:#323338;font-weight:400;">68 days</div>
<div class="t" style="left:1121.50px;top:597.00px;font-size:10.8px;line-height:10.8px;color:#323338;font-weight:400;">24 hou</div>
<div class="b" style="left:0.00px;top:608.00px;width:1152.00px;height:40.00px;background:#fdfdfd;"></div>
<svg class="b" style="left:505.60px;top:556.30px;" width="13" height="14.5" viewBox="0 0 13 14.5" fill="none"><g transform="translate(-1.5,-1) scale(0.78)"><path d="M6.2 9.5V3.2c0-.9.6-1.5 1.4-1.5s1.4.6 1.4 1.5v5.2l.2-1.1c.8-.5 1.8-.3 2.2.6l.1.5c.8-.5 1.8-.2 2.1.6l.1.6c.8-.3 1.7 0 1.9.9.2 1.3.2 3.3-.3 4.9-.6 1.8-1.7 2.9-3.8 2.9H9.4c-1.3 0-2.4-.7-3.3-1.8L3 13c-.6-.8-.4-1.7.3-2.1.6-.4 1.4-.3 2 .3z" fill="#fff" stroke="#222" stroke-width="1.1" stroke-linejoin="round"/><path d="M9.3 13v2.6M11.3 13v2.6M13.3 13v2.6" stroke="#222" stroke-width=".9"/></g></svg>
</body></html>
